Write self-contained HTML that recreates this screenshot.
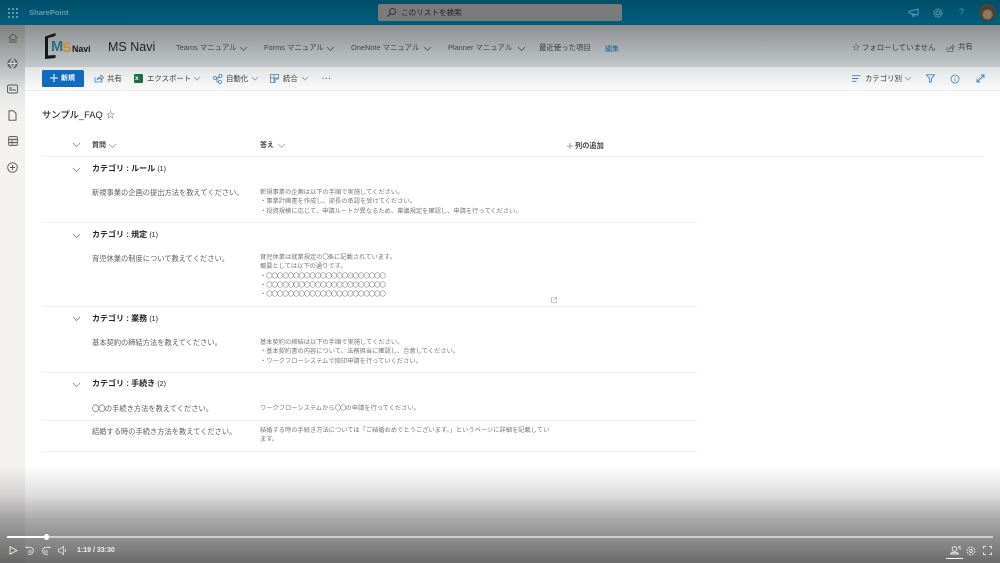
<!DOCTYPE html>
<html lang="ja"><head><meta charset="utf-8"><title>サンプル_FAQ</title>
<style>
html,body{margin:0;padding:0;background:#fff}
#p{position:relative;width:1000px;height:563px;overflow:hidden;background:#fff;font-family:"Liberation Sans","Noto Sans CJK JP",sans-serif;color:#323130}
#w{position:absolute;left:0;top:0;width:1000px;height:563px;filter:blur(.35px)}
#p *{box-sizing:border-box}
.t{position:absolute;white-space:nowrap;line-height:1}
.b{position:absolute}
.q{font-size:7.25px;color:#605e5c}
.a{font-size:6.25px;color:#777;line-height:9.35px}
.g{font-size:8px;font-weight:700;color:#252423}
.g small{font-size:7px;font-weight:400}
.h{font-size:7px;font-weight:700;color:#444}
.n{font-size:7.4px;color:#444}
.c{font-size:7.4px;color:#3b3a39}
.o{letter-spacing:-.85px}
svg{position:absolute;overflow:visible;fill:none}
.ln{position:absolute;height:1px;background:#f1f0ef}
</style></head><body><div id="p"><div id="w">

<div class="b" style="left:0;top:0;width:1000px;height:25px;background:linear-gradient(#004f69,#005f7e)"></div>
<div class="b" style="left:0;top:25px;width:1000px;height:42px;background:linear-gradient(#8e8f90,#c2c8cb)"></div>
<div class="b" style="left:0;top:67px;width:1000px;height:24px;background:linear-gradient(#e2e3e3,#fbfbfb);border-bottom:1px solid #eee"></div>
<div class="b" style="left:0;top:25px;width:25px;height:538px;background:linear-gradient(#7f8080 0,#b9bcbd 42px,#e4e5e5 66px,#f3f2f1 90px)"></div>

<svg style="left:8px;top:8px" width="10" height="10"><g fill="#5f98ab"><rect x="0" y="0" width="2" height="2"/><rect x="4" y="0" width="2" height="2"/><rect x="8" y="0" width="2" height="2"/><rect x="0" y="4" width="2" height="2"/><rect x="4" y="4" width="2" height="2"/><rect x="8" y="4" width="2" height="2"/><rect x="0" y="8" width="2" height="2"/><rect x="4" y="8" width="2" height="2"/><rect x="8" y="8" width="2" height="2"/></g></svg>
<div class="t" style="left:29px;top:9px;font-size:7.5px;font-weight:700;color:#6a9bab">SharePoint</div>

<div class="b" style="left:378px;top:4px;width:244px;height:17px;background:#7a7c7c;border-radius:2px"></div>
<svg style="left:387px;top:8px" width="9" height="9" stroke="#333" stroke-width="1"><circle cx="5.5" cy="3.5" r="3"/><path d="M3.300 5.700L.5 8.500"/></svg>
<div class="t" style="left:401px;top:9px;font-size:7.6px;color:#222">このリストを検索</div>

<svg style="left:908px;top:8px" width="11" height="9" stroke="#5f98ab" stroke-width="1"><path d="M1 3.500L10 1V7L1 5ZM4 6L4.500 8H6.500L6.500 6.500"/></svg>
<svg style="left:933px;top:8px" width="10" height="10" stroke="#5f98ab" stroke-width="1.100"><circle cx="5" cy="5" r="2"/><circle cx="5" cy="5" r="4" stroke-dasharray="2 .6"/></svg>
<div class="t" style="left:959px;top:8px;font-size:9px;color:#5f98ab">?</div>
<div class="b" style="left:979px;top:4px;width:17px;height:17px;border-radius:50%;background:radial-gradient(circle at 50% 62%,#8f7860 0 4px,#4a3a30 6px,#55504c 100%)"></div>

<svg style="left:8px;top:33px" width="10" height="10" stroke="#555" stroke-width=".9"><path d="M.5 5L5 .8 9.500 5M2 4V9.300H4V6.500H6V9.300H8V4"/></svg>
<svg style="left:7px;top:58px" width="11" height="11" stroke="#555" stroke-width=".9"><circle cx="5.500" cy="5.500" r="4.600" fill="#777"/><path d="M1 5.500H10M5.500 1C2.800 4 2.800 7 5.500 10 8.200 7 8.200 4 5.500 1" stroke="#ddd"/></svg>
<svg style="left:7px;top:84px" width="11" height="10" stroke="#555" stroke-width=".9"><rect x=".5" y="1" width="10" height="8" rx="1.500"/><path d="M2 6H9M2 4H5"/></svg>
<svg style="left:8px;top:110px" width="9" height="11" stroke="#444" stroke-width=".9"><path d="M1 .8H5.500L8 3.300V10.200H1Z"/></svg>
<svg style="left:8px;top:136px" width="10" height="10" stroke="#666" stroke-width=".9"><rect x=".5" y=".5" width="9" height="9" rx="1.500" fill="#ddd"/><path d="M.5 3.500H9.500M.5 6.500H9.500M4 3.500V9.500"/></svg>
<svg style="left:7px;top:162px" width="11" height="11" stroke="#555" stroke-width=".9"><circle cx="5.500" cy="5.500" r="4.800"/><path d="M3 5.500H8M5.500 3V8"/></svg>

<!-- logo -->
<svg style="left:44px;top:32px" width="50" height="28">
<path d="M1 4.500L11.500 1V4L4 6V23.500L11.500 23V26L1 27Z" fill="#161616"/>
</svg>
<div class="t" style="left:51px;top:40px;font-size:14.500px;font-weight:700;color:#2c6a88;letter-spacing:-.5px">M</div>
<div class="t" style="left:62px;top:40px;font-size:14px;font-weight:700;color:#cf8e25">S</div>
<div class="t" style="left:72px;top:45px;font-size:8.800px;font-weight:700;color:#161616">Navi</div>
<div class="t" style="left:108px;top:41px;font-size:12.500px;color:#222">MS Navi</div>

<div class="t n" style="left:176px;top:44px">Teams マニュアル</div>
<div class="t n" style="left:264px;top:44px">Forms マニュアル</div>
<div class="t n" style="left:351px;top:44px">OneNote マニュアル</div>
<div class="t n" style="left:448px;top:44px">Planner マニュアル</div>
<div class="t n" style="left:539px;top:44px;color:#3a3a3a">最近使った項目</div>
<div class="t" style="left:605px;top:46px;font-size:7px;color:#1b6a94">編集</div>
<svg style="left:240px;top:47px" width="7" height="4" stroke="#555" stroke-width=".8"><path d="M0 0L3.500 3.500 7 0"/></svg>
<svg style="left:327px;top:47px" width="7" height="4" stroke="#555" stroke-width=".8"><path d="M0 0L3.500 3.500 7 0"/></svg>
<svg style="left:424px;top:47px" width="7" height="4" stroke="#555" stroke-width=".8"><path d="M0 0L3.500 3.500 7 0"/></svg>
<svg style="left:518px;top:47px" width="7" height="4" stroke="#555" stroke-width=".8"><path d="M0 0L3.500 3.500 7 0"/></svg>

<div class="t" style="left:852px;top:44px;font-size:8px;color:#444">☆</div>
<div class="t" style="left:862px;top:44px;font-size:7.400px;color:#3b3a39">フォローしていません</div>
<svg style="left:946px;top:44px" width="9" height="8" stroke="#666" stroke-width=".8"><path d="M1 3V7.500H7V5M3 5C3.500 3 5 2.500 6.500 2.500V1L8.500 3 6.500 5V3.800C5 3.800 4 4 3 5Z"/></svg>
<div class="t" style="left:958px;top:43px;font-size:7.400px;color:#3b3a39">共有</div>

<!-- command bar -->
<div class="b" style="left:42px;top:70px;width:42px;height:17px;background:#0f6cbd;border-radius:1.500px"></div>
<svg style="left:50px;top:74px" width="8" height="8" stroke="#fff" stroke-width="1"><path d="M4 0V8M0 4H8"/></svg>
<div class="t" style="left:61px;top:75px;font-size:7px;font-weight:700;color:#fff">新規</div>
<svg style="left:94px;top:74px" width="10" height="9" stroke="#3f84b8" stroke-width=".8"><path d="M1 3V8H8V5.500M3 6C3.500 3.500 5.500 3 7 3V1.200L9.500 3.500 7 5.800V4.300C5.500 4.300 4 4.700 3 6Z"/></svg>
<div class="t c" style="left:107px;top:75px">共有</div>
<div class="b" style="left:134px;top:74px;width:9px;height:9px;background:#1d6f42;border-radius:1px"></div>
<div class="t" style="left:135px;top:75.500px;font-size:6.500px;font-weight:700;color:#fff">x</div>
<div class="t c" style="left:147px;top:75px">エクスポート</div>
<svg style="left:194px;top:77px" width="6" height="4" stroke="#888" stroke-width=".7"><path d="M0 0L3 3 6 0"/></svg>
<svg style="left:213px;top:74px" width="10" height="10" stroke="#3f84b8" stroke-width=".8"><circle cx="7.500" cy="2" r="1.500"/><circle cx="2" cy="4" r="1.500"/><circle cx="7" cy="8" r="1.500"/><path d="M3.500 4H5.500V2M4 4.500V8H5.500"/></svg>
<div class="t c" style="left:226px;top:75px">自動化</div>
<svg style="left:252px;top:77px" width="6" height="4" stroke="#888" stroke-width=".7"><path d="M0 0L3 3 6 0"/></svg>
<svg style="left:270px;top:74px" width="9" height="9" stroke="#3f84b8" stroke-width=".8"><path d="M.5.500H8.500V5H5V8.500H.5ZM.5 4H8.500M4 .5V8.500"/></svg>
<div class="t c" style="left:283px;top:75px">統合</div>
<svg style="left:302px;top:77px" width="6" height="4" stroke="#888" stroke-width=".7"><path d="M0 0L3 3 6 0"/></svg>
<div class="t" style="left:322px;top:75px;font-size:8px;font-weight:700;color:#666;letter-spacing:.5px">···</div>

<svg style="left:852px;top:75px" width="9" height="7" stroke="#3f84b8" stroke-width=".9"><path d="M0 .7H8.500M0 3.500H6.500M0 6.300H4.500"/></svg>
<div class="t c" style="left:865px;top:75px">カテゴリ別</div>
<svg style="left:905px;top:77px" width="6" height="4" stroke="#888" stroke-width=".7"><path d="M0 0L3 3 6 0"/></svg>
<svg style="left:926px;top:74px" width="9" height="9" stroke="#3f84b8" stroke-width=".9"><path d="M.5.800H8.500L5.500 4.500V7.500L3.500 8.500V4.500Z"/></svg>
<svg style="left:950px;top:74px" width="10" height="10" stroke="#3f84b8" stroke-width=".8"><circle cx="5" cy="5" r="4"/><path d="M5 2.800V3.600M5 4.500V7.200"/></svg>
<svg style="left:976px;top:74px" width="9" height="9" stroke="#3f84b8" stroke-width=".9"><path d="M1 8L8 1M4.800 1H8V4.200M1 4.800V8H4.200"/></svg>

<!-- title -->
<div class="t" style="left:42px;top:111px;font-size:9.300px;font-weight:500;color:#252423">サンプル_FAQ</div>
<div class="t" style="left:106px;top:111px;font-size:9px;color:#555">☆</div>

<!-- header row -->
<svg style="left:73px;top:143px" width="7" height="4" stroke="#777" stroke-width=".7"><path d="M0 0L3.500 3.500 7 0"/></svg>
<div class="t h" style="left:92px;top:142px">質問</div>
<svg style="left:109px;top:144px" width="7" height="4" stroke="#999" stroke-width=".7"><path d="M0 0L3.500 3.500 7 0"/></svg>
<div class="t h" style="left:260px;top:142px">答え</div>
<svg style="left:278px;top:144px" width="7" height="4" stroke="#999" stroke-width=".7"><path d="M0 0L3.500 3.500 7 0"/></svg>
<svg style="left:567px;top:143px" width="6" height="6" stroke="#888" stroke-width=".7"><path d="M3 0V6M0 3H6"/></svg>
<div class="t" style="left:575px;top:142px;font-size:7.200px;color:#444;font-weight:700">列の追加</div>
<div class="ln" style="left:42px;top:156px;width:942px"></div>

<!-- group 1 -->
<svg style="left:73px;top:168px" width="7" height="4" stroke="#777" stroke-width=".7"><path d="M0 0L3.500 3.500 7 0"/></svg>
<div class="t g" style="left:92px;top:165px">カテゴリ : ルール <small>(1)</small></div>
<div class="t q" style="left:92px;top:189px">新規事業の企画の提出方法を教えてください。</div>
<div class="t a" style="left:260px;top:188px">新規事業の企画は以下の手順で実施してください。<br>・事業計画書を作成し、部長の承認を受けてください。<br>・投資規模に応じて、申請ルートが異なるため、稟議規定を確認し、申請を行ってください。</div>
<div class="ln" style="left:42px;top:222px;width:655px"></div>

<!-- group 2 -->
<svg style="left:73px;top:234px" width="7" height="4" stroke="#777" stroke-width=".7"><path d="M0 0L3.500 3.500 7 0"/></svg>
<div class="t g" style="left:92px;top:231px">カテゴリ : 規定 <small>(1)</small></div>
<div class="t q" style="left:92px;top:255px">育児休業の制度について教えてください。</div>
<div class="b" style="left:260px;top:252px;width:300px;height:45px;overflow:hidden"><div class="t a" style="left:0;top:1px">育児休業は就業規定の<span class="o">〇</span>条に記載されています。<br>概要としては以下の通りです。<br>・<span class="o">〇〇〇〇〇〇〇〇〇〇〇〇〇〇〇〇〇〇〇〇〇〇</span><br>・<span class="o">〇〇〇〇〇〇〇〇〇〇〇〇〇〇〇〇〇〇〇〇〇〇</span><br>・<span class="o">〇〇〇〇〇〇〇〇〇〇〇〇〇〇〇〇〇〇〇〇〇〇</span></div></div>
<svg style="left:551px;top:297px" width="6" height="6" stroke="#999" stroke-width=".6"><path d="M2.500.5H.5V5.500H5.500V3.500M3.500.5H5.500V2.500M5.500.5L2.500 3.500"/></svg>
<div class="ln" style="left:42px;top:306px;width:655px"></div>

<!-- group 3 -->
<svg style="left:73px;top:317px" width="7" height="4" stroke="#777" stroke-width=".7"><path d="M0 0L3.500 3.500 7 0"/></svg>
<div class="t g" style="left:92px;top:315px">カテゴリ : 業務 <small>(1)</small></div>
<div class="t q" style="left:92px;top:339px">基本契約の締結方法を教えてください。</div>
<div class="t a" style="left:260px;top:338px">基本契約の締結は以下の手順で実施してください。<br>・基本契約書の内容について、法務担当に確認し、合意してください。<br>・ワークフローシステムで捺印申請を行っていください。</div>
<div class="ln" style="left:42px;top:372px;width:655px"></div>

<!-- group 4 -->
<svg style="left:73px;top:383px" width="7" height="4" stroke="#777" stroke-width=".7"><path d="M0 0L3.500 3.500 7 0"/></svg>
<div class="t g" style="left:92px;top:380px">カテゴリ : 手続き <small>(2)</small></div>
<div class="t q" style="left:92px;top:405px"><span class="o">〇〇</span>の手続き方法を教えてください。</div>
<div class="t a" style="left:260px;top:404px">ワークフローシステムから<span class="o">〇〇</span>の申請を行ってください。</div>
<div class="ln" style="left:42px;top:420px;width:655px"></div>
<div class="t q" style="left:92px;top:428px">結婚する時の手続き方法を教えてください。</div>
<div class="t a" style="left:260px;top:426px">結婚する時の手続き方法については「ご結婚おめでとうございます。」というページに詳細を記載してい<br>ます。</div>
<div class="ln" style="left:42px;top:451px;width:655px"></div>

<!-- bottom fade -->
<div class="b" style="left:0;top:465px;width:1000px;height:98px;background:linear-gradient(rgba(0,0,0,0),rgba(0,0,0,.13) 30%,rgba(0,0,0,.34) 56%,rgba(0,0,0,.58))"></div>

<!-- player -->
<div class="b" style="left:7px;top:536px;width:986px;height:1.500px;background:#d9d9d9;opacity:.85"></div>
<div class="b" style="left:7px;top:536px;width:39px;height:1.500px;background:#fff"></div>
<div class="b" style="left:43.500px;top:534px;width:5.500px;height:5.500px;border-radius:50%;background:#fff"></div>
<svg style="left:9px;top:546px" width="9" height="9" stroke="#eee" stroke-width=".9"><path d="M1 .8L8 4.500 1 8.200Z"/></svg>
<svg style="left:25px;top:546px" width="9" height="9" stroke="#e8e8e8" stroke-width=".9"><path d="M3 1.500H1V.5M1.500 2C5 0 8.500 2 8.300 5 8 8 5 9 3 8"/><path d="M4 4V7M6 4V7" stroke-width=".8"/></svg>
<svg style="left:42px;top:546px" width="9" height="9" stroke="#e8e8e8" stroke-width=".9"><path d="M6 1.500H8V.5M7.500 2C4 0 .5 2 .7 5 1 8 4 9 6 8"/><path d="M3 4V7M5 4V7" stroke-width=".8"/></svg>
<svg style="left:58px;top:546px" width="10" height="9" stroke="#e8e8e8" stroke-width=".8"><path d="M.5 3H2.500L5.500.5V8.500L2.500 6H.5ZM7 3C7.700 4 7.700 5 7 6"/></svg>
<div class="t" style="left:77px;top:547px;font-size:7px;font-weight:700;color:#f2f2f2">1:19 / 33:30</div>
<svg style="left:949px;top:546px" width="12" height="9" stroke="#eee" stroke-width=".9"><circle cx="5.500" cy="3" r="2.300"/><path d="M1.500 8C2 5.800 9 5.800 9.500 8ZM9 1.500L11 .5V4"/></svg>
<div class="b" style="left:946px;top:558px;width:17px;height:1px;background:#fff"></div>
<svg style="left:966px;top:546px" width="10" height="10" stroke="#e8e8e8" stroke-width=".9"><circle cx="5" cy="5" r="1.500"/><circle cx="5" cy="5" r="3.900" stroke-dasharray="2.200 .8"/></svg>
<svg style="left:983px;top:546px" width="9" height="9" stroke="#e8e8e8" stroke-width=".9"><path d="M.5 2.800V.5H2.800M6.200.5H8.500V2.800M8.500 6.200V8.500H6.200M2.800 8.500H.5V6.200"/></svg>
</div></div></body></html>
